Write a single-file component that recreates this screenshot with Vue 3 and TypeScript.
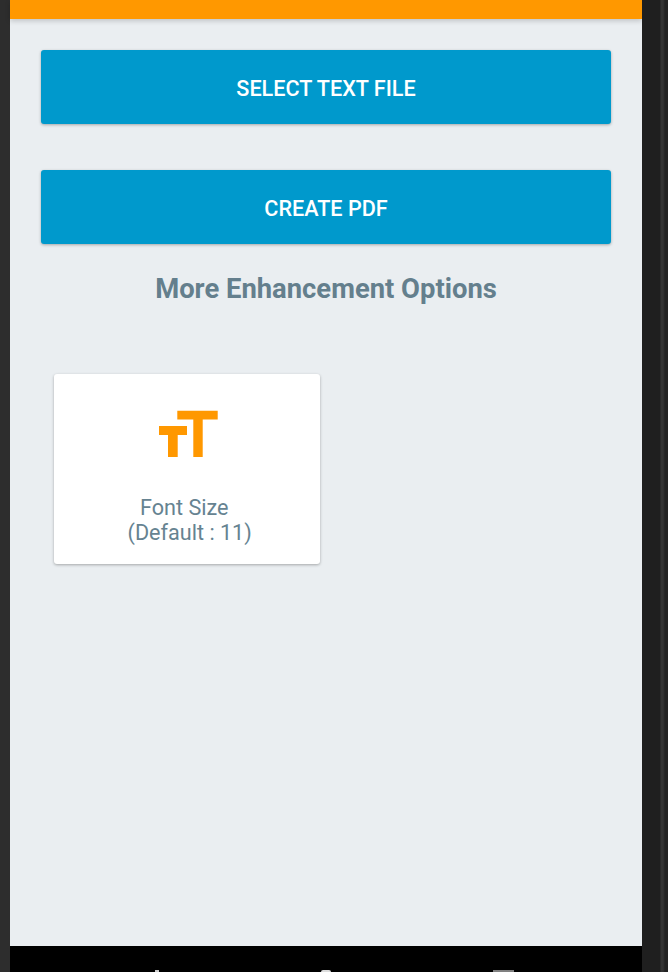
<script setup lang="ts">
const actions: string[] = ['SELECT TEXT FILE', 'CREATE PDF']
</script>

<template>
  <div class="device">
    <div class="screen">
      <header class="appbar"></header>
      <main class="content">
        <button v-for="a in actions" :key="a" class="action" type="button">{{ a }}</button>
        <h2 class="heading">More Enhancement Options</h2>
        <div class="card">
          <svg class="icon" width="60" height="48" viewBox="0 0 60 48" aria-hidden="true">
            <path fill="#ff9800" d="M19.300 0.700h40.400v8.800H44.700V47h-9.400V9.500h-16z" />
            <path fill="#ff9800" d="M1 16h28v9h-9.300v22h-9.700V25H1z" />
          </svg>
          <p class="label">Font Size&nbsp;<br />&nbsp;(Default : 11)</p>
        </div>
      </main>
      <nav class="navbar">
        <span class="nav-tip back"></span>
        <span class="nav-tip home"></span>
        <span class="nav-tip recent"></span>
      </nav>
    </div>
    <div class="edge"></div>
  </div>
</template>

<style>
html, body { margin: 0; background: #1d1d1d; }
</style>

<style scoped>
.device {
  width: 668px;
  height: 972px;
  display: flex;
  overflow: hidden;
  background: #2d2d2d;
  padding-left: 10px;
  box-sizing: border-box;
  font-family: Roboto, "Liberation Sans", sans-serif;
}
.screen {
  width: 632px;
  height: 972px;
  display: flex;
  flex-direction: column;
  background: #eaeef1;
  flex: none;
}
.edge {
  flex: 1;
  background: linear-gradient(90deg, #1f1f1f 0, #1f1f1f 18px, #333 19px, #333 21px, #222 23px, #222 100%);
}
.appbar {
  height: 19px;
  flex: none;
  background: #ff9800;
  box-shadow: 0 2px 5px rgba(0, 0, 0, 0.18);
}
.content {
  flex: 1;
  display: flex;
  flex-direction: column;
  align-items: flex-start;
  padding: 31px 31px 0;
}
.action {
  width: 570px;
  height: 74px;
  flex: none;
  margin-bottom: 46px;
  padding: 2px 0 0;
  border: 0;
  border-radius: 3px;
  background: #0099cc;
  color: #fff;
  font: 500 21.6px Roboto, "Liberation Sans", sans-serif;
  box-shadow: 0 1px 3px rgba(0, 0, 0, 0.3);
}
.action:last-of-type {
  margin-bottom: 0;
}
.heading {
  width: 570px;
  margin: 29px 0 0;
  text-align: center;
  color: #647f8d;
  font-size: 27.4px;
  line-height: 32px;
  font-weight: 700;
}
.card {
  width: 266px;
  height: 190px;
  margin: 69px 0 0 13px;
  padding-top: 36px;
  box-sizing: border-box;
  display: flex;
  flex-direction: column;
  align-items: center;
  background: #fff;
  border-radius: 3px;
  box-shadow: 0 1px 3px rgba(0, 0, 0, 0.3);
}
.icon {
  flex: none;
  margin-left: 2px;
}
.label {
  margin: 37px 0 0;
  text-align: center;
  color: #668391;
  font-size: 21.6px;
  line-height: 25px;
}
.navbar {
  height: 26px;
  flex: none;
  background: #000;
  position: relative;
}
.nav-tip {
  position: absolute;
  bottom: 0;
  height: 2px;
}
.back {
  left: 145px;
  width: 4px;
  background: #ccc;
}
.home {
  left: 311px;
  width: 10px;
  border-radius: 5px 5px 0 0;
  background: #ddd;
}
.recent {
  left: 483px;
  width: 21px;
  background: #808080;
}
</style>
